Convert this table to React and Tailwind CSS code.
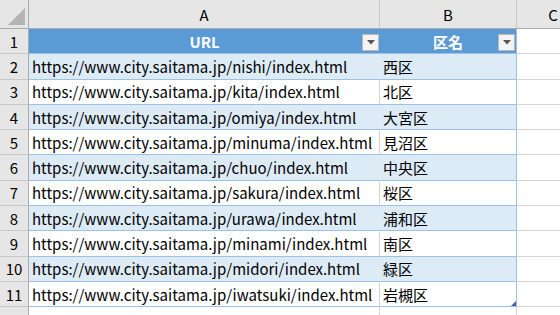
import React from 'react';

const rows = [
  { url: 'https://www.city.saitama.jp/nishi/index.html', ku: '西区' },
  { url: 'https://www.city.saitama.jp/kita/index.html', ku: '北区' },
  { url: 'https://www.city.saitama.jp/omiya/index.html', ku: '大宮区' },
  { url: 'https://www.city.saitama.jp/minuma/index.html', ku: '見沼区' },
  { url: 'https://www.city.saitama.jp/chuo/index.html', ku: '中央区' },
  { url: 'https://www.city.saitama.jp/sakura/index.html', ku: '桜区' },
  { url: 'https://www.city.saitama.jp/urawa/index.html', ku: '浦和区' },
  { url: 'https://www.city.saitama.jp/minami/index.html', ku: '南区' },
  { url: 'https://www.city.saitama.jp/midori/index.html', ku: '緑区' },
  { url: 'https://www.city.saitama.jp/iwatsuki/index.html', ku: '岩槻区' },
];

const font = { fontFamily: '"Noto Sans CJK JP", "Noto Sans", sans-serif' };

// filter dropdown button in the table header
const FilterButton = () => (
  <div className="absolute right-[1px] top-[5px] w-[17px] h-[17px] bg-[#f3f3f3] border border-[#b8b8b8] flex items-center justify-center">
    <svg width="8" height="5" viewBox="0 0 8 5">
      <path d="M0 0 L8 0 L4 4.5 Z" fill="#555" />
    </svg>
  </div>
);

const App = () => {
  return (
    <div
      className="w-[560px] h-[315px] overflow-hidden bg-white text-black text-[15px] leading-none"
      style={font}
    >
      {/* column headers */}
      <div className="flex h-[29px] bg-[#e6e6e6] border-b border-[#ababab]">
        <div className="w-[29px] shrink-0 border-r border-[#ababab] relative">
          <svg className="absolute left-[8px] top-[8px]" width="17" height="17" viewBox="0 0 17 17">
            <path d="M17 0 L17 17 L0 17 Z" fill="#b4b4b4" />
          </svg>
        </div>
        <div className="w-[351px] shrink-0 border-r border-[#c8c8c8] flex items-center justify-center">A</div>
        <div className="w-[137px] shrink-0 border-r border-[#c8c8c8] flex items-center justify-center">B</div>
        <div className="w-[72px] shrink-0 flex items-center justify-center">C</div>
      </div>

      {/* table header row */}
      <div className="flex h-[25.3px]">
        <div className="w-[29px] shrink-0 bg-[#e6e6e6] border-r border-b border-r-[#ababab] border-b-[#c8c8c8] flex items-center justify-center">1</div>
        <div className="w-[351px] shrink-0 bg-[#5b9bd5] border-b border-[#9bc2e6] relative flex items-center justify-center text-white font-bold">
          URL
          <FilterButton />
        </div>
        <div className="w-[137px] shrink-0 bg-[#5b9bd5] border-b border-r border-[#9bc2e6] relative flex items-center justify-center text-white font-bold">
          区名
          <FilterButton />
        </div>
        <div className="w-[72px] shrink-0 border-b border-[#d4d4d4]"></div>
      </div>

      {rows.map((r, i) => {
        const band = i % 2 === 0;
        const last = i === rows.length - 1;
        return (
          <div key={i} className="flex h-[25.3px]">
            <div className="w-[29px] shrink-0 bg-[#e6e6e6] border-r border-b border-r-[#ababab] border-b-[#c8c8c8] flex items-center justify-center">
              {i + 2}
            </div>
            <div
              className={
                'w-[351px] shrink-0 border-b border-b-[#9bc2e6] border-r flex items-center pl-[3px] whitespace-nowrap ' +
                (band ? 'bg-[#ddebf7] border-r-[#ddebf7]' : 'bg-white border-r-[#d4d4d4]')
              }
            >
              {r.url}
            </div>
            <div
              className={
                'w-[137px] shrink-0 border-b border-r border-[#9bc2e6] flex items-center pl-[3px] relative ' +
                (band ? 'bg-[#ddebf7]' : 'bg-white')
              }
            >
              {r.ku}
              {last && (
                <svg className="absolute right-0 bottom-0" width="5" height="5" viewBox="0 0 5 5">
                  <path d="M5 0 L5 5 L0 5 Z" fill="#3b5ea8" />
                </svg>
              )}
            </div>
            <div className="w-[72px] shrink-0 border-b border-[#d4d4d4]"></div>
          </div>
        );
      })}

      {/* row 12, cut off at the window edge */}
      <div className="flex h-[25.3px]">
        <div className="w-[29px] shrink-0 bg-[#e6e6e6] border-r border-[#ababab] flex items-start justify-center pt-[6px]">12</div>
        <div className="w-[351px] shrink-0 border-r border-[#d4d4d4]"></div>
        <div className="w-[137px] shrink-0 border-r border-[#d4d4d4]"></div>
      </div>
    </div>
  );
};

export default App;
